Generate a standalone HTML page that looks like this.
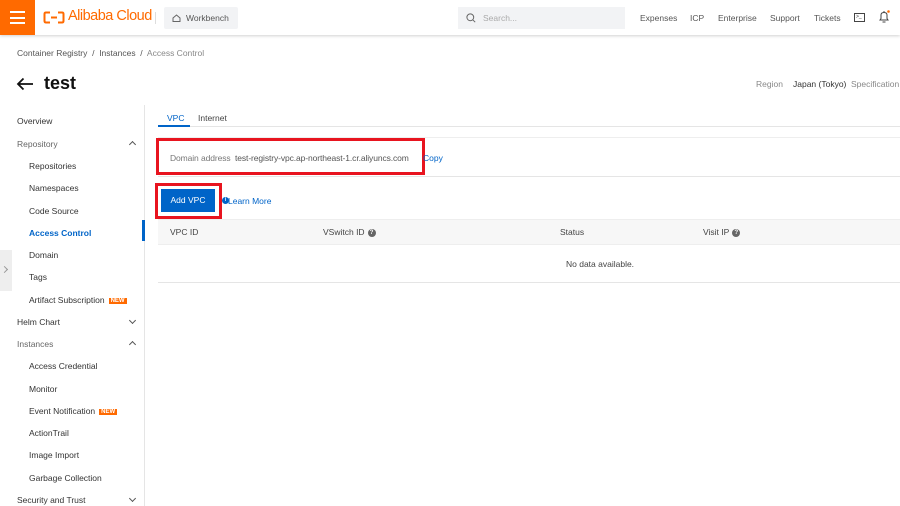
<!DOCTYPE html>
<html><head><style>
*{margin:0;padding:0;box-sizing:border-box}
body{width:900px;height:506px;overflow:hidden;background:#fff;font-family:"Liberation Sans",sans-serif;color:#333;position:relative;font-size:8.5px}
.a{position:absolute;white-space:nowrap}
.top{position:absolute;left:0;top:0;width:900px;height:35px;background:#fff;box-shadow:0 1px 3px rgba(0,0,0,.18)}
.nav{color:#555;font-size:8.5px;top:13px}
.sb{left:17px;font-size:8.5px;color:#333}
.sub{left:29px}
.gray{color:#666}
.new{background:#ff6a00;color:#fff;font-size:6px;padding:0 2px;font-weight:bold;margin-left:4px;vertical-align:1px}
.chev{position:absolute;left:130px;width:5px;height:5px;border-left:1px solid #555;border-top:1px solid #555}
.up{transform:rotate(45deg)}
.dn{transform:rotate(225deg)}
.q{display:inline-block;width:8px;height:8px;border-radius:50%;background:#666;color:#fff;font-size:6px;text-align:center;line-height:8px;font-weight:bold;margin-left:3px;vertical-align:middle}
</style></head><body>
<div class="top"></div>
<div class="a" style="left:0;top:0;width:35px;height:35px;background:#ff6a00"></div>
<div class="a" style="left:10px;top:11px;width:15px;height:2px;background:#fff"></div>
<div class="a" style="left:10px;top:16.5px;width:15px;height:2px;background:#fff"></div>
<div class="a" style="left:10px;top:22px;width:15px;height:2px;background:#fff"></div>
<svg class="a" style="left:43px;top:11px" width="22" height="13" viewBox="0 0 22 13"><path d="M7 1.5H3Q1.5 1.5 1.5 3V10Q1.5 11.5 3 11.5H7M15 1.5H19Q20.5 1.5 20.5 3V10Q20.5 11.5 19 11.5H15M8 6.5H14" fill="none" stroke="#ff6a00" stroke-width="2"/></svg>
<div class="a" style="left:68px;top:8px;font-size:14.5px;color:#ff6a00;letter-spacing:-0.5px">Alibaba Cloud</div>
<div class="a" style="left:155px;top:12px;width:1px;height:12px;background:#ddd"></div>
<div class="a" style="left:164px;top:7px;width:74px;height:22px;background:#f2f3f5;border-radius:2px"></div>
<svg class="a" style="left:172px;top:14px" width="9" height="8" viewBox="0 0 9 8"><path d="M1 4L4.5 1L8 4V7.5H1Z" fill="none" stroke="#666" stroke-width="1"/></svg>
<div class="a" style="left:186px;top:13px;font-size:8.5px;color:#555">Workbench</div>
<div class="a" style="left:458px;top:7px;width:167px;height:22px;background:#f2f3f5"></div>
<svg class="a" style="left:466px;top:13px" width="10" height="10" viewBox="0 0 10 10"><circle cx="4.3" cy="4.3" r="3.4" fill="none" stroke="#666"/><path d="M6.8 6.8L9.2 9.2" stroke="#666"/></svg>
<div class="a" style="left:483px;top:13px;color:#aaa;font-size:8.5px">Search...</div>
<div class="a nav" style="left:640px">Expenses</div>
<div class="a nav" style="left:690px">ICP</div>
<div class="a nav" style="left:718px">Enterprise</div>
<div class="a nav" style="left:770px">Support</div>
<div class="a nav" style="left:814px">Tickets</div>
<div class="a" style="left:854px;top:13px;width:11px;height:9px;border:1px solid #444;font-size:5px;line-height:6px;padding-left:1px">&gt;_</div>
<svg class="a" style="left:878px;top:10px" width="12" height="14" viewBox="0 0 12 14"><path d="M2 10H10L9 8.5V5Q9 2.5 6 2.5Q3 2.5 3 5V8.5ZM6 1V2.5M4.5 12H7.5" fill="none" stroke="#444"/><circle cx="10.5" cy="1.5" r="1.3" fill="#ff6a00"/></svg>

<div class="a" style="left:17px;top:48px;color:#555">Container Registry &nbsp;/&nbsp; Instances &nbsp;/&nbsp; <span style="color:#888">Access Control</span></div>
<svg class="a" style="left:16px;top:77px" width="18" height="14" viewBox="0 0 18 14"><path d="M17 7H2M7.5 1.5L2 7L7.5 12.5" fill="none" stroke="#111" stroke-width="1.8"/></svg>
<div class="a" style="left:44px;top:73px;font-size:18px;color:#111;font-weight:600">test</div>
<div class="a" style="left:756px;top:79px;color:#888">Region</div>
<div class="a" style="left:793px;top:79px;color:#333">Japan (Tokyo)</div>
<div class="a" style="left:851px;top:79px;color:#888">Specification</div>

<div class="a" style="left:144px;top:105px;width:1px;height:401px;background:#e5e5e5"></div>
<div class="a" style="left:142px;top:220px;width:3px;height:21px;background:#0064c8"></div>
<div class="a" style="left:0;top:250px;width:12px;height:41px;background:#eee"></div>
<div class="a" style="left:2px;top:267px;width:5px;height:5px;border-right:1px solid #999;border-top:1px solid #999;transform:rotate(45deg)"></div>

<div class="a sb" style="top:116px">Overview</div>
<div class="a sb gray" style="top:139px">Repository</div><div class="chev up" style="top:142px"></div>
<div class="a sb sub" style="top:161px">Repositories</div>
<div class="a sb sub" style="top:183px">Namespaces</div>
<div class="a sb sub" style="top:206px">Code Source</div>
<div class="a sb sub" style="top:228px;color:#0064c8;font-weight:bold">Access Control</div>
<div class="a sb sub" style="top:250px">Domain</div>
<div class="a sb sub" style="top:272px">Tags</div>
<div class="a sb sub" style="top:295px">Artifact Subscription<span class="new">NEW</span></div>
<div class="a sb" style="top:317px">Helm Chart</div><div class="chev dn" style="top:318px"></div>
<div class="a sb gray" style="top:339px">Instances</div><div class="chev up" style="top:342px"></div>
<div class="a sb sub" style="top:361px">Access Credential</div>
<div class="a sb sub" style="top:384px">Monitor</div>
<div class="a sb sub" style="top:406px">Event Notification<span class="new">NEW</span></div>
<div class="a sb sub" style="top:428px">ActionTrail</div>
<div class="a sb sub" style="top:450px">Image Import</div>
<div class="a sb sub" style="top:473px">Garbage Collection</div>
<div class="a sb" style="top:495px">Security and Trust</div><div class="chev dn" style="top:496px"></div>

<div class="a" style="left:158px;top:126px;width:742px;height:1px;background:#e5e5e5"></div>
<div class="a" style="left:167px;top:113px;color:#0064c8">VPC</div>
<div class="a" style="left:158px;top:125px;width:32px;height:2px;background:#0064c8"></div>
<div class="a" style="left:198px;top:113px;color:#444">Internet</div>

<div class="a" style="left:158px;top:137px;width:742px;height:40px;border-top:1px solid #eee;border-bottom:1px solid #e5e5e5"></div>
<div class="a" style="left:156px;top:138px;width:269px;height:37px;border:3.5px solid #e8141f"></div>
<div class="a" style="left:170px;top:153px;color:#777;letter-spacing:-0.1px">Domain address &nbsp;<span style="color:#555">test-registry-vpc.ap-northeast-1.cr.aliyuncs.com</span></div>
<div class="a" style="left:423px;top:153px;color:#0064c8">Copy</div>

<div class="a" style="left:155px;top:183px;width:67px;height:36px;border:3.5px solid #e8141f"></div>
<div class="a" style="left:161px;top:189px;width:54px;height:23px;background:#0064c8;color:#fff;text-align:center;line-height:23px">Add VPC</div>
<div class="a" style="left:222px;top:197px;width:7px;height:7px;border-radius:50%;background:#0064c8;color:#fff;font-size:5px;text-align:center;line-height:7px;font-weight:bold">i</div>
<div class="a" style="left:228px;top:196px;color:#0064c8">Learn More</div>

<div class="a" style="left:158px;top:219px;width:742px;height:26px;background:#f7f7f7;border-top:1px solid #eee;border-bottom:1px solid #eee"></div>
<div class="a" style="left:170px;top:227px;color:#444">VPC ID</div>
<div class="a" style="left:323px;top:227px;color:#444">VSwitch ID<span class="q">?</span></div>
<div class="a" style="left:560px;top:227px;color:#444">Status</div>
<div class="a" style="left:703px;top:227px;color:#444">Visit IP<span class="q">?</span></div>
<div class="a" style="left:158px;top:282px;width:742px;height:1px;background:#e5e5e5"></div>
<div class="a" style="left:566px;top:259px;color:#444">No data available.</div>
</body></html>
